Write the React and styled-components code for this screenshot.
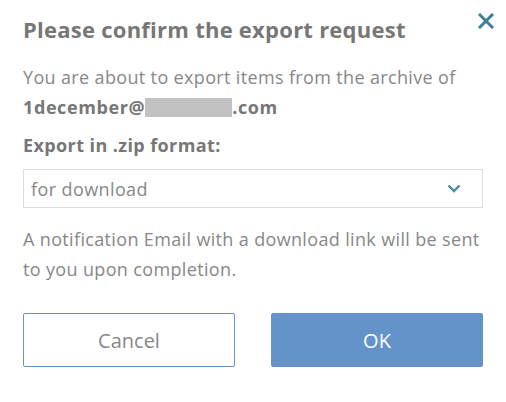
import React from 'react';
import styled, { createGlobalStyle } from 'styled-components';

const GlobalStyle = createGlobalStyle`
    body {
        margin: 0;
        background: #fff;
        font-family: 'Open Sans', 'Liberation Sans', sans-serif;
    }
`;

const Dialog = styled.div`
    position: relative;
    width: 506px;
    height: 402px;
    box-sizing: border-box;
    padding: 13px 23px 0 23px;
    background: #fff;
    color: #888;
`;

const Title = styled.h1`
    margin: 0;
    font-size: 22px;
    font-weight: 700;
    line-height: 32px;
    letter-spacing: 0.25px;
    color: #777;
`;

const CloseButton = styled.button`
    position: absolute;
    top: 9px;
    right: 8px;
    width: 24px;
    height: 24px;
    padding: 0;
    border: 0;
    background: none;
    display: flex;
    align-items: center;
    justify-content: center;
    cursor: pointer;
`;

const Text = styled.p`
    margin: ${(p) => p.$top || 0}px 0 0;
    font-size: 18px;
    line-height: 30px;
    letter-spacing: 0.35px;
    color: #888;
`;

const Strong = styled.span`
    font-weight: 700;
    letter-spacing: 0.6px;
    color: #777;
`;

const Redacted = styled.span`
    display: inline-block;
    width: 87px;
    height: 19px;
    vertical-align: -3px;
    background: #c2c2c2;
`;

const Label = styled.div`
    margin-top: 8px;
    font-size: 18px;
    font-weight: 700;
    line-height: 30px;
    letter-spacing: 0.4px;
    color: #777;
`;

const Select = styled.div`
    margin-top: 9px;
    height: 39px;
    box-sizing: border-box;
    border: 1px solid #dedede;
    display: flex;
    align-items: center;
    justify-content: space-between;
    padding: 0 21px 0 7px;
    font-size: 18px;
    letter-spacing: 0.4px;
    color: #888;
`;

const Buttons = styled.div`
    margin-top: 29px;
    display: grid;
    grid-template-columns: 1fr 1fr;
    gap: 36px;
`;

const Button = styled.button`
    height: 54px;
    border-radius: 2px;
    font-family: inherit;
    font-size: 20px;
    cursor: pointer;
    border: 1px solid #6594cb;
    background: ${(p) => (p.$primary ? '#6393c9' : '#fff')};
    color: ${(p) => (p.$primary ? '#fff' : '#888')};
`;

const Cross = () => (
    <svg width="16" height="16" viewBox="0 0 16 16">
        <path d="M2 2 L14 14 M14 2 L2 14" stroke="#3d7f99" strokeWidth="3" strokeLinecap="square" />
    </svg>
);

const Chevron = () => (
    <svg width="14" height="9" viewBox="0 0 14 9">
        <path d="M1.5 1.5 L7 7 L12.5 1.5" fill="none" stroke="#4a8ba3" strokeWidth="2.4" />
    </svg>
);

export default function App() {
    return (
        <>
            <GlobalStyle />
            <Dialog>
                <Title>Please confirm the export request</Title>
                <CloseButton aria-label="Close">
                    <Cross />
                </CloseButton>
                <Text $top={17}>
                    You are about to export items from the archive of
                    <br />
                    <Strong>
                        1december@<Redacted />.com
                    </Strong>
                </Text>
                <Label>Export in .zip format:</Label>
                <Select>
                    <span>for download</span>
                    <Chevron />
                </Select>
                <Text $top={16}>
                    A notification Email with a download link will be sent to you upon completion.
                </Text>
                <Buttons>
                    <Button>Cancel</Button>
                    <Button $primary>OK</Button>
                </Buttons>
            </Dialog>
        </>
    );
}
